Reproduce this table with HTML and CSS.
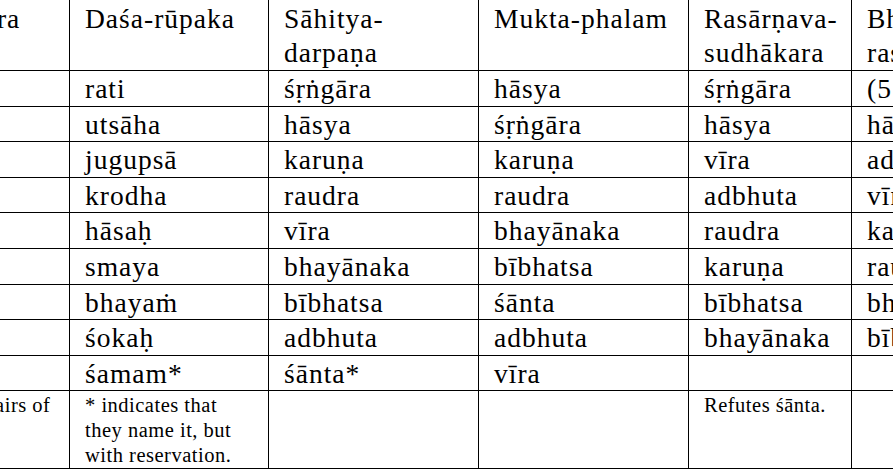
FILE: index.html
```html
<!DOCTYPE html>
<html lang="en">
<head>
<meta charset="utf-8">
<title>Rasa lists</title>
<link rel="stylesheet" href="styles.css">
</head>
<body>
<div class="page">
<table class="rasa-table">
  <colgroup>
    <col class="c-first">
    <col class="c-dasa">
    <col class="c-sahitya">
    <col class="c-mukta">
    <col class="c-rasarnava">
    <col class="c-bhakti">
  </colgroup>
  <thead>
    <tr class="head-row">
      <th>Nāṭyaśāstra</th>
      <th>Daśa-rūpaka</th>
      <th>Sāhitya-<br>darpaṇa</th>
      <th>Mukta-phalam</th>
      <th>Rasārṇava-<br>sudhākara</th>
      <th>Bhakti-<br>rasāmṛta-sindhu</th>
    </tr>
  </thead>
  <tbody>
    <tr><td></td><td>rati</td><td>śṛṅgāra</td><td>hāsya</td><td>śṛṅgāra</td><td>(5 primary)</td></tr>
    <tr><td></td><td>utsāha</td><td>hāsya</td><td>śṛṅgāra</td><td>hāsya</td><td>hāsya</td></tr>
    <tr><td></td><td>jugupsā</td><td>karuṇa</td><td>karuṇa</td><td>vīra</td><td>adbhuta</td></tr>
    <tr><td></td><td>krodha</td><td>raudra</td><td>raudra</td><td>adbhuta</td><td>vīra</td></tr>
    <tr><td></td><td>hāsaḥ</td><td>vīra</td><td>bhayānaka</td><td>raudra</td><td>karuṇa</td></tr>
    <tr><td></td><td>smaya</td><td>bhayānaka</td><td>bībhatsa</td><td>karuṇa</td><td>raudra</td></tr>
    <tr><td></td><td>bhayaṁ</td><td>bībhatsa</td><td>śānta</td><td>bībhatsa</td><td>bhayānaka</td></tr>
    <tr><td></td><td>śokaḥ</td><td>adbhuta</td><td>adbhuta</td><td>bhayānaka</td><td>bībhatsa</td></tr>
    <tr><td></td><td>śamam*</td><td>śānta*</td><td>vīra</td><td></td><td></td></tr>
    <tr class="note-row">
      <td class="note-first">Four pairs of<br>rasas.</td>
      <td class="note-dasa">* indicates that they name it, but with reservation.</td>
      <td></td>
      <td></td>
      <td class="note-short">Refutes śānta.</td>
      <td></td>
    </tr>
  </tbody>
</table>
</div>
</body>
</html>
```

FILE: styles.css
```css
html, body {
  margin: 0;
  padding: 0;
  background: #ffffff;
}

.page {
  width: 893px;
  height: 469px;
  overflow: hidden;
}

.rasa-table {
  border-collapse: collapse;
  table-layout: fixed;
  width: 1134px;
  margin-left: -135px;
  margin-top: -1px;
  font-family: "Liberation Serif", "Times New Roman", serif;
  font-size: 27.5px;
  letter-spacing: 1px;
  color: #000000;
}

.c-first { width: 204px; }
.c-dasa { width: 199px; }
.c-sahitya { width: 210px; }
.c-mukta { width: 210px; }
.c-rasarnava { width: 163px; }
.c-bhakti { width: 148px; }

.rasa-table th,
.rasa-table td {
  border: 1px solid #000000;
  padding: 2px 10px 0 15px;
  line-height: 32.6px;
  height: 32.6px;
  text-align: left;
  vertical-align: top;
  font-weight: normal;
  white-space: nowrap;
  overflow: hidden;
}

.head-row th {
  line-height: 34px;
  height: 68px;
}

.note-row td {
  font-size: 20.5px;
  letter-spacing: 0.5px;
  line-height: 25px;
  padding-top: 2px;
  padding-right: 6px;
  height: 73px;
  white-space: normal;
}

.note-row td.note-dasa {
  padding-right: 26px;
}

.note-row td.note-first {
  padding-left: 72px;
  white-space: nowrap;
}
```
